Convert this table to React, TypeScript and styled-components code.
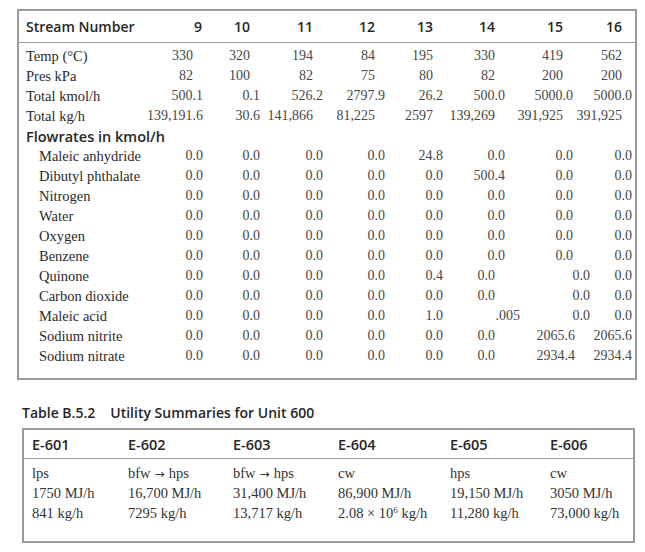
import React from "react";
import styled, { createGlobalStyle } from "styled-components";

const Global = createGlobalStyle`
  html, body { margin: 0; padding: 0; background: #ffffff; }
  body { font-family: "Liberation Serif", serif; color: #2a2a2a; }
`;

const SERIF = `"Liberation Serif", "Times New Roman", serif`;
const SANS = `"Open Sans", "Noto Sans", sans-serif`;

const Page = styled.div`
  width: 645px;
  height: 552px;
  box-sizing: border-box;
  padding: 9px 8px 0 17px;
  display: flex;
  flex-direction: column;
  overflow: hidden;
`;

const StreamBox = styled.div`
  width: 620px;
  box-sizing: border-box;
  border: 2px solid #9a9a9a;
  padding-bottom: 12px;
`;

const COLS = "121px 56px 57px 63px 62px 58px 62px 68px 59px";

const HeadRow = styled.div`
  display: grid;
  grid-template-columns: ${COLS};
  align-items: center;
  height: 31px;
  padding: 0 3px 0 7px;
  border-bottom: 1px solid #9a9a9a;
  margin-bottom: 3px;
  font-family: ${SANS};
  font-weight: 600;
  font-size: 14px;
  color: #262626;
  white-space: nowrap;
`;

const HeadCell = styled.div<{ $pad: number }>`
  text-align: right;
  padding-right: ${(p) => p.$pad}px;
`;

const Row = styled.div`
  display: grid;
  grid-template-columns: ${COLS};
  align-items: center;
  height: 20px;
  padding: 0 3px 0 7px;
  font-family: ${SERIF};
  font-size: 14px;
`;

const Label = styled.div<{ $indent?: boolean }>`
  padding-left: ${(p) => (p.$indent ? 13 : 0)}px;
  color: #2a2a2a;
  white-space: nowrap;
  font-size: 14.5px;
`;

const SectionLabel = styled.div`
  grid-column: 1 / -1;
  font-family: ${SANS};
  font-weight: 600;
  font-size: 14.5px;
  color: #262626;
`;

const Num = styled.div<{ $off: number }>`
  text-align: right;
  white-space: nowrap;
  color: #474747;
  padding-right: ${(p) => Math.max(0, p.$off)}px;
  margin-right: ${(p) => Math.min(0, p.$off)}px;
`;

type Cell = string | [string, number];

const headers = ["9", "10", "11", "12", "13", "14", "15", "16"];

const upper: [string, Cell[]][] = [
  ["Temp (°C)", ["330", "320", "194", "84", "195", "330", "419", "562"]],
  ["Pres kPa", ["82", "100", "82", "75", "80", "82", "200", "200"]],
  ["Total kmol/h", ["500.1", "0.1", "526.2", "2797.9", "26.2", "500.0", "5000.0", "5000.0"]],
  ["Total kg/h", ["139,191.6", "30.6", "141,866", "81,225", "2597", "139,269", "391,925", "391,925"]],
];

const z = "0.0";
const flows: [string, Cell[]][] = [
  ["Maleic anhydride", [z, z, z, z, "24.8", z, z, z]],
  ["Dibutyl phthalate", [z, z, z, z, z, "500.4", z, z]],
  ["Nitrogen", [z, z, z, z, z, z, z, z]],
  ["Water", [z, z, z, z, z, z, z, z]],
  ["Oxygen", [z, z, z, z, z, z, z, z]],
  ["Benzene", [z, z, z, z, z, z, z, z]],
  ["Quinone", [z, z, z, z, "0.4", [z, 10], [z, -17], z]],
  ["Carbon dioxide", [z, z, z, z, z, [z, 10], [z, -17], z]],
  ["Maleic acid", [z, z, z, z, "1.0", [".005", -15], [z, -17], z]],
  ["Sodium nitrite", [z, z, z, z, z, [z, 10], ["2065.6", -2], "2065.6"]],
  ["Sodium nitrate", [z, z, z, z, z, [z, 10], ["2934.4", -2], "2934.4"]],
];

function offsetOf(c: Cell): [string, number] {
  if (Array.isArray(c)) return c;
  return [c, c.includes(".") ? 0 : 10];
}

const Title = styled.div`
  margin: 24px 0 6px 5px;
  height: 18px;
  line-height: 18px;
  display: flex;
  gap: 15px;
  font-family: ${SANS};
  font-weight: 600;
  font-size: 14px;
  color: #262626;
  white-space: nowrap;
`;

const UtilBox = styled.div`
  margin-left: 5px;
  width: 613px;
  box-sizing: border-box;
  border: 2px solid #9a9a9a;
  padding-bottom: 18px;
`;

const UCOLS = "96px 105px 105px 112px 100px 1fr";

const UHead = styled.div`
  display: grid;
  grid-template-columns: ${UCOLS};
  align-items: center;
  height: 28px;
  padding-left: 8px;
  border-bottom: 1px solid #9a9a9a;
  margin-bottom: 4px;
  font-family: ${SANS};
  font-weight: 600;
  font-size: 14.5px;
  color: #262626;
`;

const URow = styled.div`
  display: grid;
  grid-template-columns: ${UCOLS};
  align-items: center;
  height: 20px;
  padding-left: 8px;
  font-family: ${SERIF};
  font-size: 14.5px;
  color: #333;
  white-space: nowrap;
`;

const Arrow = styled.span`
  font-family: "DejaVu Sans", sans-serif;
  font-size: 12px;
  margin: 0 4px;
`;

const Sup = styled.sup`
  font-size: 9px;
  vertical-align: 5px;
  line-height: 0;
`;

const units = ["E-601", "E-602", "E-603", "E-604", "E-605", "E-606"];

export default function App() {
  return (
    <Page>
      <Global />
      <StreamBox>
        <HeadRow>
          <div>Stream Number</div>
          {headers.map((h, i) => (
            <HeadCell key={h} $pad={i === 0 ? 1 : 10}>
              {h}
            </HeadCell>
          ))}
        </HeadRow>
        {upper.map(([label, cells]) => (
          <Row key={label}>
            <Label>{label}</Label>
            {cells.map((c, i) => {
              const [v, o] = offsetOf(c);
              return (
                <Num key={i} $off={o}>
                  {v}
                </Num>
              );
            })}
          </Row>
        ))}
        <Row>
          <SectionLabel>Flowrates in kmol/h</SectionLabel>
        </Row>
        {flows.map(([label, cells]) => (
          <Row key={label}>
            <Label $indent>{label}</Label>
            {cells.map((c, i) => {
              const [v, o] = offsetOf(c);
              return (
                <Num key={i} $off={o}>
                  {v}
                </Num>
              );
            })}
          </Row>
        ))}
      </StreamBox>

      <Title>
        <span>Table B.5.2</span>
        <span>Utility Summaries for Unit 600</span>
      </Title>
      <UtilBox>
        <UHead>
          {units.map((u) => (
            <div key={u}>{u}</div>
          ))}
        </UHead>
        <URow>
          <div>lps</div>
          <div>
            bfw<Arrow>→</Arrow>hps
          </div>
          <div>
            bfw<Arrow>→</Arrow>hps
          </div>
          <div>cw</div>
          <div>hps</div>
          <div>cw</div>
        </URow>
        <URow>
          <div>1750 MJ/h</div>
          <div>16,700 MJ/h</div>
          <div>31,400 MJ/h</div>
          <div>86,900 MJ/h</div>
          <div>19,150 MJ/h</div>
          <div>3050 MJ/h</div>
        </URow>
        <URow>
          <div>841 kg/h</div>
          <div>7295 kg/h</div>
          <div>13,717 kg/h</div>
          <div>
            2.08 × 10<Sup>6</Sup> kg/h
          </div>
          <div>11,280 kg/h</div>
          <div>73,000 kg/h</div>
        </URow>
      </UtilBox>
    </Page>
  );
}
